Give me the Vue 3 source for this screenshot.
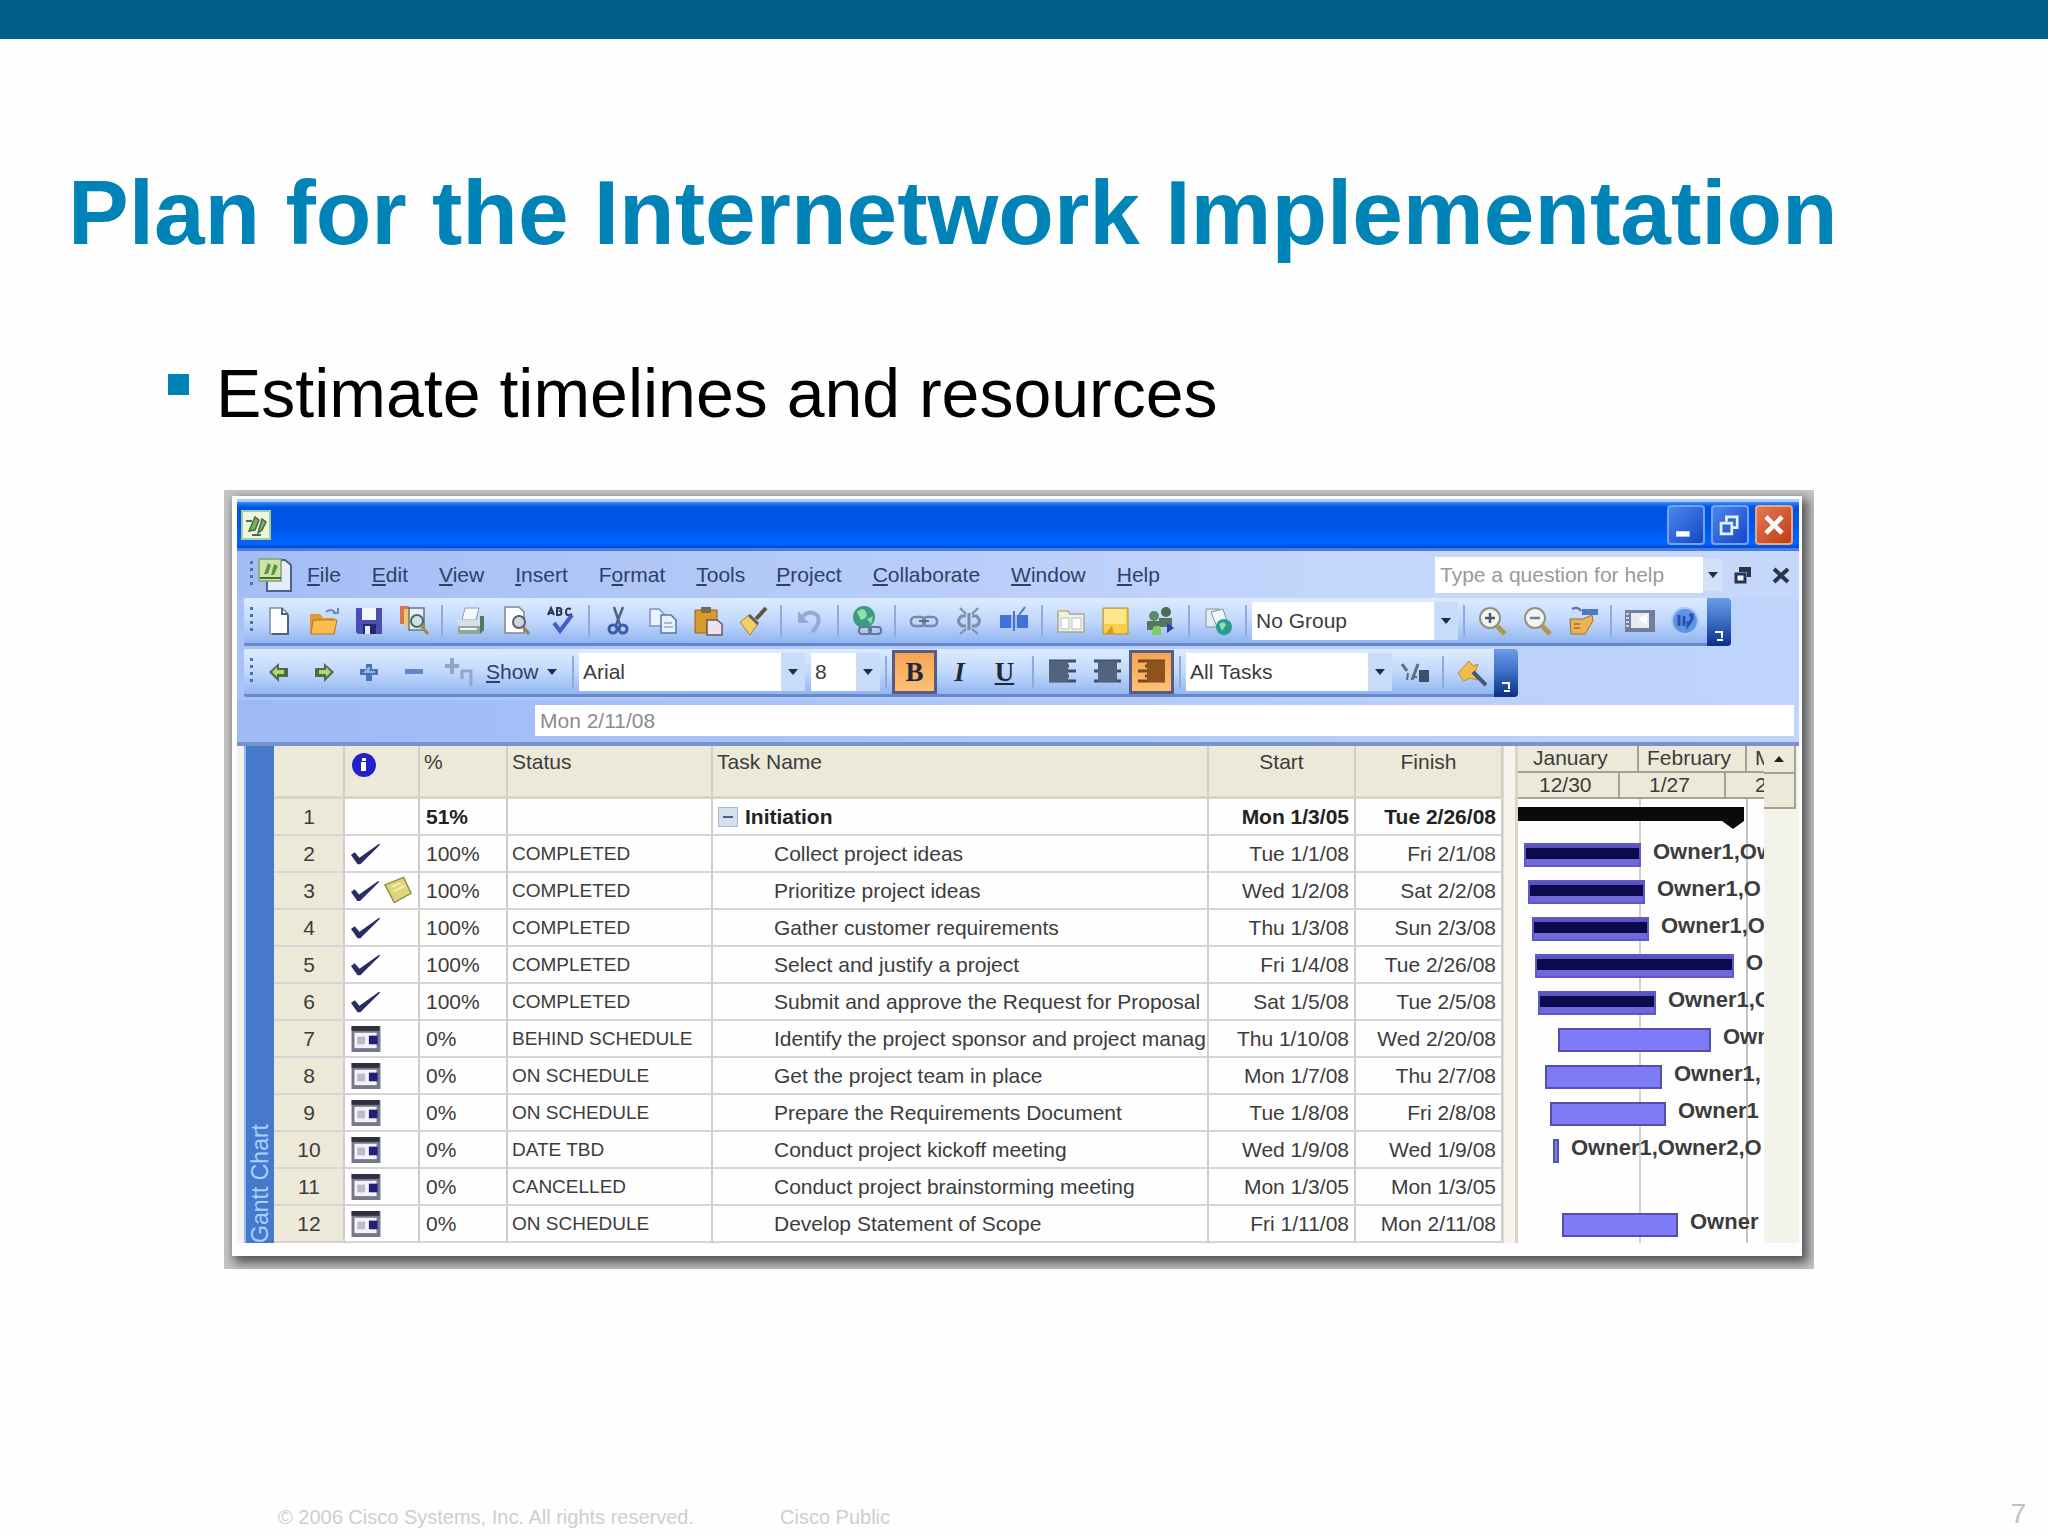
<script setup>
import { ref } from 'vue';

const menus = ['File', 'Edit', 'View', 'Insert', 'Format', 'Tools', 'Project', 'Collaborate', 'Window', 'Help'];
// index of the underlined access key, 0 when missing
const accessKeys = { Format: 1 };

const icons = {
  blank: '<path d="M6 2h12l6 6v20H6z" fill="#fff" stroke="#7c8ba8" stroke-width="1.5"/><path d="M18 2v6h6M24 9v19H8" fill="none" stroke="#55617c" stroke-width="2"/>',
  open: '<path d="M1 8h10l3 4h12v16H1z" fill="#e39a2c"/><path d="M4 14h24l-3 14H2z" fill="#fbbd4e" stroke="#b0752a" stroke-width="1"/><path d="M17 6q6-5 10 2M24 7h5V2" fill="none" stroke="#6b88bf" stroke-width="2"/>',
  save: '<path d="M2 2h26v26H4l-2-2z" fill="#4a4fb4"/><path d="M8 2h14v12H8z" fill="#f4f6ff"/><path d="M9 18h13v10H9z" fill="#26286e"/><path d="M11 20h5v8h-5z" fill="#e6eaff"/>',
  search: '<path d="M1 0h9v18H1z" fill="#d8744e"/><path d="M5 3h9v18H5z" fill="#f2c66d"/><path d="M10 2h15v22H10z" fill="#e8f0f4" stroke="#5c7a86" stroke-width="1.5"/><circle cx="18" cy="15" r="6" fill="#c6e4ea" stroke="#54675c" stroke-width="2"/><path d="M22 20l7 8" stroke="#a58a4b" stroke-width="3"/>',
  print: '<path d="M9 2h14l-3 12H6z" fill="#f5f8fb" stroke="#8c9cab"/><path d="M2 14h22l4-5v14l-4 5H2z" fill="#8fa79f"/><path d="M2 14h22v6H2z" fill="#d7e2de"/><path d="M24 10h4v14l-4 4z" fill="#4b7a5e"/><path d="M4 23h17" stroke="#f2f6f4" stroke-width="2"/>',
  preview: '<path d="M4 1h14l5 5v21H4z" fill="#fff" stroke="#7c8791" stroke-width="1.5"/><circle cx="18" cy="16" r="6" fill="#cdd8e0" stroke="#5b5f66" stroke-width="2"/><path d="M22 21l6 7" stroke="#977f4f" stroke-width="3"/>',
  spell: '<path d="M2 9l3-7 3 7M3 7h4M11 2v7h3q3-2 0-4q3-1 0-3zM25 3q-5-2-5 3t6 2" fill="none" stroke="#2d3550" stroke-width="2"/><path d="M8 17l6 8L26 9" fill="none" stroke="#4060c8" stroke-width="4"/>',
  cut: '<path d="M11 1l6 18M20 1l-7 18" stroke="#4c6288" stroke-width="2.5"/><circle cx="10" cy="23" r="4" fill="none" stroke="#3a5aa8" stroke-width="3"/><circle cx="20" cy="23" r="4" fill="none" stroke="#3a5aa8" stroke-width="3"/>',
  copy: '<path d="M2 3h9l5 5v12H2z" fill="#eaf2ff" stroke="#7b93c4" stroke-width="1.5"/><path d="M13 9h10l5 5v13H13z" fill="#eaf2ff" stroke="#5674b4" stroke-width="1.5"/><path d="M16 17h8M16 21h9" stroke="#8ba6da" stroke-width="1.5"/>',
  paste: '<path d="M2 4h22v23H2z" fill="#d99a2b" stroke="#8d6326"/><path d="M8 1h10v6H8z" fill="#7b6a4c"/><path d="M14 14h10l5 4v11H14z" fill="#e9e4f0" stroke="#6c5560" stroke-width="1.5"/>',
  painter: '<path d="M28 2L18 13" stroke="#5f563f" stroke-width="4"/><path d="M11 9l9 9-8 11L2 16z" fill="#f2cd68" stroke="#a7823c"/><path d="M11 9l9 9" stroke="#6a5e50" stroke-width="3"/>',
  undo: '<path d="M6 12q8-9 16-3q5 7-5 17" fill="none" stroke="#94a9d6" stroke-width="4"/><path d="M3 5v12h11z" fill="#94a9d6"/>',
  globe: '<circle cx="12" cy="11" r="11" fill="#3d9a83"/><path d="M5 6q6-6 9 0t-5 8zM15 13l6-3-2 8z" fill="#8fe0a9"/><rect x="7" y="21" width="12" height="7" rx="3" fill="none" stroke="#66788e" stroke-width="2"/><rect x="17" y="21" width="12" height="7" rx="3" fill="none" stroke="#66788e" stroke-width="2"/>',
  link: '<rect x="2" y="11" width="14" height="9" rx="4" fill="none" stroke="#7489aa" stroke-width="2.5"/><rect x="14" y="11" width="14" height="9" rx="4" fill="none" stroke="#7489aa" stroke-width="2.5"/><path d="M10 15h10" stroke="#5b6b88" stroke-width="2"/>',
  unlink: '<path d="M6 2l6 6M24 2l-6 6M6 28l6-5M24 28l-6-5" stroke="#7d8daa" stroke-width="2"/><path d="M12 10H8q-7 5 0 10h4M18 10h4q7 5 0 10h-4M15 7v17" fill="none" stroke="#7d8daa" stroke-width="3"/>',
  split: '<path d="M1 9h11v13H1zM18 9h11v13H18z" fill="#4272d8"/><path d="M12 9h6v13h-6z" fill="#9dbdf3"/><path d="M26 1l-6 8M15 5v20" stroke="#5774b0" stroke-width="2" fill="none"/>',
  info: '<path d="M2 5h10l2 3h14v18H2z" fill="#eeefe8" stroke="#a3a898" stroke-width="1.5"/><path d="M5 12h8v11H5zM16 12h9v11h-9z" fill="#fff" stroke="#bdbfb2"/><path d="M2 5h9" stroke="#d5c46b" stroke-width="2"/>',
  note: '<path d="M2 2h25v26H2z" fill="#f8cf4b" stroke="#b38b2d"/><path d="M3 3h22v15H3z" fill="#ffe88c"/><path d="M4 28l7-8 2 8z" fill="#d99b22"/>',
  assign: '<circle cx="20" cy="6" r="5" fill="#4c6b55"/><circle cx="8" cy="10" r="5" fill="#5d8d63"/><path d="M1 15h13v9H1zM13 12h13v9H13z" fill="#54755f"/><path d="M7 21q8-4 8 4v4H6z" fill="#7fcf67"/><path d="M21 17l7 5-7 5z" fill="#2c3fb8"/>',
  publish: '<path d="M3 3h13v18H3z" fill="#e4eaf2" stroke="#8391a6"/><path d="M8 6l12-3 4 12-10 6z" fill="#f4f7fb" stroke="#8391a6"/><circle cx="21" cy="21" r="8" fill="#2a9a93"/><path d="M16 18q5-4 7 1l-4 6z" fill="#8ee0b5"/>',
  zoomIn: '<circle cx="12" cy="12" r="10" fill="#f2f4ee" stroke="#8f947f" stroke-width="2"/><path d="M7 12h10M12 7v10" stroke="#4b5870" stroke-width="2.5"/><path d="M19 20l8 8" stroke="#b19a4b" stroke-width="5"/>',
  zoomOut: '<circle cx="12" cy="12" r="10" fill="#f2f4ee" stroke="#8f947f" stroke-width="2"/><path d="M7 12h10" stroke="#6e7fae" stroke-width="2.5"/><path d="M19 20l8 8" stroke="#b19a4b" stroke-width="5"/>',
  goTo: '<path d="M4 3q6-3 9 2" fill="none" stroke="#60749e" stroke-width="2"/><path d="M14 3h16v6H14z" fill="#4b7cc9"/><path d="M2 13h13l9-4 1 6-8 13H3z" fill="#edb254" stroke="#9b6f2c"/><path d="M6 18h6M6 22h6" stroke="#9b6f2c" stroke-width="1.5"/>',
  camera: '<path d="M0 4h30v22H0z" fill="#71809a"/><path d="M6 7h18v15H6z" fill="#e6ebf4"/><path d="M13 13l9-5v11z" fill="#fff"/><path d="M1 8h3M1 12h3M1 16h3M1 20h3" stroke="#c9d2e2" stroke-width="2"/>',
  help: '<circle cx="15" cy="15" r="13" fill="#5e93e6" stroke="#a9c8f6" stroke-width="2"/><path d="M9 9v11M14 10v10M19 9h3v4l-4 6v-4" fill="none" stroke="#2753b0" stroke-width="3"/>',
  left: '<path d="M15 6v5h9v9h-9v5L5 15z" fill="#4f6b4a"/><path d="M13 10v3h7v4h-7v3l-5-5z" fill="#b6d66c"/>',
  right: '<path d="M15 6v5H6v9h9v5l10-10z" fill="#4f6b4a"/><path d="M17 10v3h-7v4h7v3l5-5z" fill="#b6d66c"/>',
  plus: '<path d="M12 7h6v5h6v6h-6v6h-6v-6H6v-6h6z" fill="#4a72b8"/><path d="M14 10h2v4h5v2H9" fill="#8fb3ea"/>',
  minus: '<path d="M6 12h18v5H6z" fill="#5f88c9"/>',
  outline: '<path d="M8 1v16M1 9h14" stroke="#93a4c5" stroke-width="4"/><path d="M17 14h10v5M18 14v8M27 19v10" fill="none" stroke="#93a4c5" stroke-width="3"/>',
  alignLeft: '<path d="M2 4h27M2 9h20M2 14h27M2 19h20M2 24h27" stroke="#3e506b" stroke-width="3"/><path d="M2 4h19v21H2z" fill="#52637c"/>',
  alignCenter: '<path d="M2 4h27M6 9h19M2 14h27M6 19h19M2 24h27" stroke="#3e506b" stroke-width="3"/><path d="M6 4h19v21H6z" fill="#52637c"/>',
  alignRight: '<path d="M1 4h27M8 9h20M1 14h27M8 19h20M1 24h27" stroke="#7b4a1c" stroke-width="3"/><path d="M10 4h18v21H10z" fill="#8c541c"/>',
  filter: '<path d="M2 7l5 7M18 7l-6 16" fill="none" stroke="#5f6c80" stroke-width="3"/><path d="M8 16l-1 7M12 20h5" fill="none" stroke="#5f6c80" stroke-width="2"/><path d="M19 13h10v12H19z" fill="#3c5068"/>',
  wizard: '<path d="M1 16L12 4l4 5 5-2-3 9 2 7-7-2-6 3z" fill="#f0bd4e" stroke="#b98b3a"/><path d="M16 15l13 13" stroke="#41557f" stroke-width="4"/>',
};

// "|" draws a separator
const standardBar = [
  'blank', 'open', 'save', 'search', '|',
  'print', 'preview', 'spell', '|',
  'cut', 'copy', 'paste', 'painter', '|',
  'undo', '|', 'globe', '|',
  'link', 'unlink', 'split', '|',
  'info', 'note', 'assign', '|',
  'publish', '|',
];
const zoomBar = ['|', 'zoomIn', 'zoomOut', 'goTo', '|', 'camera', 'help'];
const outlineBar = ['left', 'right', 'plus', 'minus', 'outline'];

const group = ref('No Group');
const font = ref('Arial');
const size = ref('8');
const filter = ref('All Tasks');
const entry = ref('Mon 2/11/08');

// bar: [start, width] on the timescale, in pixels from its left edge
const tasks = [
  { percent: '51%', status: '', name: 'Initiation', start: 'Mon 1/3/05', finish: 'Tue 2/26/08', summary: true, bar: [0, 226] },
  { percent: '100%', status: 'COMPLETED', name: 'Collect project ideas', start: 'Tue 1/1/08', finish: 'Fri 2/1/08', bar: [6, 117], owner: 'Owner1,Ow' },
  { percent: '100%', status: 'COMPLETED', name: 'Prioritize project ideas', start: 'Wed 1/2/08', finish: 'Sat 2/2/08', note: true, bar: [10, 117], owner: 'Owner1,O' },
  { percent: '100%', status: 'COMPLETED', name: 'Gather customer requirements', start: 'Thu 1/3/08', finish: 'Sun 2/3/08', bar: [14, 117], owner: 'Owner1,O' },
  { percent: '100%', status: 'COMPLETED', name: 'Select and justify a project', start: 'Fri 1/4/08', finish: 'Tue 2/26/08', bar: [17, 199], owner: 'O' },
  { percent: '100%', status: 'COMPLETED', name: 'Submit and approve the Request for Proposal', start: 'Sat 1/5/08', finish: 'Tue 2/5/08', bar: [20, 118], owner: 'Owner1,O' },
  { percent: '0%', status: 'BEHIND SCHEDULE', name: 'Identify the project sponsor and project manag', start: 'Thu 1/10/08', finish: 'Wed 2/20/08', bar: [40, 153], owner: 'Own' },
  { percent: '0%', status: 'ON SCHEDULE', name: 'Get the project team in place', start: 'Mon 1/7/08', finish: 'Thu 2/7/08', bar: [27, 117], owner: 'Owner1,' },
  { percent: '0%', status: 'ON SCHEDULE', name: 'Prepare the Requirements Document', start: 'Tue 1/8/08', finish: 'Fri 2/8/08', bar: [32, 116], owner: 'Owner1' },
  { percent: '0%', status: 'DATE TBD', name: 'Conduct project kickoff meeting', start: 'Wed 1/9/08', finish: 'Wed 1/9/08', bar: [35, 6], owner: 'Owner1,Owner2,O' },
  { percent: '0%', status: 'CANCELLED', name: 'Conduct project brainstorming meeting', start: 'Mon 1/3/05', finish: 'Mon 1/3/05' },
  { percent: '0%', status: 'ON SCHEDULE', name: 'Develop Statement of Scope', start: 'Fri 1/11/08', finish: 'Mon 2/11/08', bar: [44, 116], owner: 'Owner' },
];

function barStyle(task) {
  return { marginLeft: task.bar[0] + 'px', width: task.bar[1] + 'px' };
}
</script>

<template>
  <div class="slide">
    <div class="slide-band"></div>
    <main class="slide-main">
      <h1>Plan for the Internetwork Implementation</h1>
      <ul class="points">
        <li>Estimate timelines and resources</li>
      </ul>

      <figure class="shot">
        <div class="shot-card">
          <div class="window">
            <header class="titlebar">
              <svg class="app-icon" viewBox="0 0 30 30" aria-hidden="true">
                <rect x="1" y="1" width="28" height="28" fill="#eef7dc" stroke="#9fce9c" stroke-width="2" />
                <path d="M8 21l6-14 4 3-4 10zM17 23l4-14 4 3-4 8z" fill="#7fae5c" stroke="#476b45" stroke-width="1.5" />
                <path d="M5 11h6M11 25h9" stroke="#49704b" stroke-width="2" />
              </svg>
              <div class="caption-buttons">
                <button type="button" class="caption-btn" aria-label="Minimize">
                  <svg viewBox="0 0 38 40"><path d="M8 27h15v6H8z" fill="#fff" /></svg>
                </button>
                <button type="button" class="caption-btn" aria-label="Restore">
                  <svg viewBox="0 0 38 40">
                    <path d="M15 16v-5h12v12h-5M9 18h12v12H9z" fill="none" stroke="#e6f0ff" stroke-width="3" />
                  </svg>
                </button>
                <button type="button" class="caption-btn close" aria-label="Close">
                  <svg viewBox="0 0 38 40"><path d="M10 11l18 18M28 11L10 29" stroke="#fff" stroke-width="5" /></svg>
                </button>
              </div>
            </header>

            <nav class="menubar">
              <span class="grip"></span>
              <svg class="doc-icon" viewBox="0 0 36 36" aria-hidden="true">
                <path d="M10 3h18l6 5v26H10z" fill="#e6edfb" stroke="#4c6290" stroke-width="2" />
                <rect x="2" y="2" width="22" height="22" fill="#cfe3a4" stroke="#7da36a" stroke-width="1.5" />
                <path d="M7 17l4-11 3 2-3 9zM14 18l3-11 4 2-4 9z" fill="#5f9148" />
                <path d="M3 21h21" stroke="#476b45" stroke-width="2" />
              </svg>
              <div class="menu-items">
                <button v-for="menu in menus" :key="menu" type="button" class="menu-item">{{ menu.slice(0, accessKeys[menu] ?? 0) }}<u>{{ menu.charAt(accessKeys[menu] ?? 0) }}</u>{{ menu.slice((accessKeys[menu] ?? 0) + 1) }}</button>
              </div>
              <div class="menu-right">
                <input class="ask" type="text" placeholder="Type a question for help" aria-label="Type a question for help" />
                <button type="button" class="ask-arrow" aria-label="Recent questions"><span class="caret"></span></button>
                <button type="button" class="doc-btn" aria-label="Restore document">
                  <svg viewBox="0 0 20 20"><path d="M6 2h12v10h-4V7H6z" fill="#28354f" /><path d="M3 9h9v8H3z" fill="#eef4ff" stroke="#28354f" stroke-width="3" /></svg>
                </button>
                <button type="button" class="doc-btn" aria-label="Close document">
                  <svg viewBox="0 0 20 20"><path d="M3 4l14 13M17 4L3 17" stroke="#28354f" stroke-width="4" /></svg>
                </button>
              </div>
            </nav>

            <div class="dock">
              <div class="toolbar">
                <span class="grip"></span>
                <template v-for="(name, i) in standardBar" :key="i">
                  <span v-if="name === '|'" class="sep"></span>
                  <button v-else type="button" class="tool" :aria-label="name">
                    <svg viewBox="0 0 30 30" v-html="icons[name]"></svg>
                  </button>
                </template>
                <label class="combo combo-wide">
                  <select v-model="group" aria-label="Group by"><option>No Group</option></select>
                  <span class="combo-arrow"><span class="caret"></span></span>
                </label>
                <template v-for="(name, i) in zoomBar" :key="'z' + i">
                  <span v-if="name === '|'" class="sep"></span>
                  <button v-else type="button" class="tool" :aria-label="name">
                    <svg viewBox="0 0 30 30" v-html="icons[name]"></svg>
                  </button>
                </template>
                <button type="button" class="overflow" aria-label="Toolbar options">
                  <svg viewBox="0 0 12 12"><path d="M2 2h7v6M4 10h6" fill="none" stroke="#fff" stroke-width="2" /></svg>
                </button>
              </div>

              <div class="toolbar">
                <span class="grip"></span>
                <button v-for="name in outlineBar" :key="name" type="button" class="tool" :aria-label="name">
                  <svg viewBox="0 0 30 30" v-html="icons[name]"></svg>
                </button>
                <button type="button" class="show"><span><u>S</u>how</span><span class="caret"></span></button>
                <span class="sep"></span>
                <label class="combo combo-font">
                  <select v-model="font" aria-label="Font"><option>Arial</option></select>
                  <span class="combo-arrow"><span class="caret"></span></span>
                </label>
                <label class="combo combo-size">
                  <select v-model="size" aria-label="Font size"><option>8</option></select>
                  <span class="combo-arrow"><span class="caret"></span></span>
                </label>
                <span class="sep"></span>
                <button type="button" class="tool letter pressed"><b>B</b></button>
                <button type="button" class="tool letter"><i>I</i></button>
                <button type="button" class="tool letter"><u>U</u></button>
                <span class="sep"></span>
                <button type="button" class="tool" aria-label="Align left"><svg viewBox="0 0 30 30" v-html="icons.alignLeft"></svg></button>
                <button type="button" class="tool" aria-label="Center"><svg viewBox="0 0 30 30" v-html="icons.alignCenter"></svg></button>
                <button type="button" class="tool pressed" aria-label="Align right"><svg viewBox="0 0 30 30" v-html="icons.alignRight"></svg></button>
                <span class="sep"></span>
                <label class="combo combo-wide">
                  <select v-model="filter" aria-label="Filter"><option>All Tasks</option></select>
                  <span class="combo-arrow"><span class="caret"></span></span>
                </label>
                <button type="button" class="tool" aria-label="AutoFilter"><svg viewBox="0 0 30 30" v-html="icons.filter"></svg></button>
                <span class="sep"></span>
                <button type="button" class="tool" aria-label="Gantt Chart Wizard"><svg viewBox="0 0 30 30" v-html="icons.wizard"></svg></button>
                <button type="button" class="overflow" aria-label="Toolbar options">
                  <svg viewBox="0 0 12 12"><path d="M2 2h7v6M4 10h6" fill="none" stroke="#fff" stroke-width="2" /></svg>
                </button>
              </div>
            </div>

            <div class="entrybar">
              <input v-model="entry" type="text" aria-label="Entry" />
            </div>

            <div class="view">
              <div class="viewbar"><span>Gantt Chart</span></div>
              <table class="grid">
                <colgroup>
                  <col class="c-id" /><col class="c-info" /><col class="c-percent" /><col class="c-status" />
                  <col /><col class="c-date" /><col class="c-date" />
                </colgroup>
                <thead>
                  <tr>
                    <th></th>
                    <th class="info">
                      <svg class="info-icon" viewBox="0 0 24 24" aria-label="Indicators">
                        <circle cx="12" cy="12" r="12" fill="#2222cc" />
                        <path d="M9 9h5v9H9zM10 5h4v3h-4z" fill="#fff" />
                      </svg>
                    </th>
                    <th>%</th>
                    <th>Status</th>
                    <th>Task Name</th>
                    <th class="date-head">Start</th>
                    <th class="date-head">Finish</th>
                  </tr>
                </thead>
                <tbody>
                  <tr v-for="(task, i) in tasks" :key="i" :class="{ summary: task.summary }">
                    <th scope="row">{{ i + 1 }}</th>
                    <td class="info">
                      <div class="marks">
                        <svg v-if="task.percent === '100%'" class="mark" viewBox="0 0 32 24">
                          <path d="M0 13l4-3 5 6L30 1l1 1L10 23H7z" fill="#2b2b66" />
                        </svg>
                        <svg v-if="task.note" class="mark-note" viewBox="0 0 30 30">
                          <path d="M1 9L21 1l8 17L11 28z" fill="#ddd67a" stroke="#8e8a48" stroke-width="1.5" />
                          <path d="M8 11l10-4M10 16l12-6" stroke="#f6f2ae" stroke-width="2" />
                        </svg>
                        <svg v-if="task.percent === '0%'" class="mark" viewBox="0 0 30 27">
                          <path d="M0 0h30v27H0z" fill="#77778c" />
                          <path d="M0 0h29v5H0z" fill="#2f2f42" />
                          <path d="M3 7h23v16H3z" fill="#f2f2f8" />
                          <path d="M6 11h8v8H6z" fill="#b9b9c8" />
                          <path d="M18 10h9v9h-9z" fill="#20207c" />
                        </svg>
                      </div>
                    </td>
                    <td class="percent">{{ task.percent }}</td>
                    <td class="status">{{ task.status }}</td>
                    <td class="name">
                      <div class="name-inner">
                        <button v-if="task.summary" type="button" class="collapse" aria-label="Collapse"></button>
                        {{ task.name }}
                      </div>
                    </td>
                    <td class="date">{{ task.start }}</td>
                    <td class="date">{{ task.finish }}</td>
                  </tr>
                </tbody>
              </table>
              <div class="splitter"></div>
              <div class="chart">
                <div class="tier tier-months">
                  <span>January</span><span>February</span><span>M</span>
                </div>
                <div class="tier tier-days">
                  <span>12/30</span><span>1/27</span><span>2</span>
                </div>
                <div class="bars">
                  <div v-for="(task, i) in tasks" :key="i" class="bar-row">
                    <svg v-if="task.summary" class="bar-summary" :style="barStyle(task)" viewBox="0 0 226 22">
                      <path d="M0 0h226v14l-11 8-11-8H0z" fill="#0a0a0a" />
                    </svg>
                    <template v-else-if="task.bar">
                      <span class="bar" :class="{ done: task.percent === '100%' }" :style="barStyle(task)"></span>
                      <span class="owner">{{ task.owner }}</span>
                    </template>
                  </div>
                </div>
              </div>
              <div class="scroll">
                <button type="button" class="scroll-up" aria-label="Scroll up"><span class="caret up"></span></button>
                <div class="scroll-thumb"></div>
              </div>
            </div>
          </div>
        </div>
      </figure>
    </main>

    <footer class="slide-footer">
      <span>© 2006 Cisco Systems, Inc. All rights reserved.</span>
      <span>Cisco Public</span>
      <span class="page-no">7</span>
    </footer>
  </div>
</template>

<style>
body {
  margin: 0;
  background: #fefefe;
}
</style>

<style scoped>
.slide {
  display: flex;
  flex-direction: column;
  min-height: 100vh;
  font-family: 'Liberation Sans', Arial, sans-serif;
  color: #000;
}

.slide * {
  box-sizing: border-box;
}

.slide-band {
  height: 39px;
  background: #005f87;
}

.slide-main {
  flex: 1;
  padding-top: 122px;
}

h1 {
  margin: 0 0 88px 68px;
  font-size: 91px;
  line-height: 104px;
  color: #0084b8;
}

.points {
  list-style: none;
  margin: 0 0 57px 168px;
  padding: 0;
}

.points li {
  display: flex;
  gap: 27px;
  font-size: 68px;
  line-height: 80px;
}

.points li::before {
  content: '';
  width: 21px;
  height: 21px;
  margin-top: 21px;
  background: #0084b8;
}

.shot {
  margin: 0 234px 0 224px;
  padding: 6px 12px 13px 8px;
  background: #c6c6c6;
  overflow: hidden;
}

.shot-card {
  padding: 3px 3px 13px 5px;
  background: #fdfdfd;
  box-shadow: 4px 5px 10px 2px #555;
}

.window {
  border-top: 3px solid #a9cdfd;
  font-size: 21px;
  line-height: 24px;
  color: #3c3c3c;
}

button,
input,
select {
  font: inherit;
  color: inherit;
  margin: 0;
  padding: 0;
  border: 0;
  background: none;
  border-radius: 0;
}

.titlebar {
  display: flex;
  align-items: center;
  justify-content: space-between;
  height: 49px;
  padding: 0 6px 0 4px;
  border-bottom: 3px solid #4a7ce0;
  background: linear-gradient(#3a8cf8 0, #0053e0 5px, #0055e6 50%, #0066ff 90%, #0048d0);
}

.app-icon {
  width: 30px;
  height: 32px;
}

.caption-buttons {
  display: flex;
  gap: 6px;
}

.caption-btn {
  width: 38px;
  height: 40px;
  border: 2px solid #6fa4f8;
  border-radius: 4px;
  background: linear-gradient(135deg, #4a86ee, #1747c4);
}

.caption-btn.close {
  border-color: #e9a58e;
  background: linear-gradient(135deg, #e37a54, #c23c14);
}

.caption-btn svg {
  display: block;
  width: 100%;
  height: 100%;
}

.menubar {
  display: flex;
  align-items: center;
  height: 47px;
  padding: 0 8px 0 13px;
  background: linear-gradient(90deg, #a4bdf5, #c5d8fc 75%);
  color: #2f4068;
}

.grip {
  width: 3px;
  height: 28px;
  background: repeating-linear-gradient(#506fae 0 3px, transparent 3px 7px);
}

.doc-icon {
  width: 36px;
  height: 36px;
  margin-left: 4px;
}

.menu-items {
  display: flex;
  gap: 31px;
  margin-left: 14px;
}

.menu-right {
  display: flex;
  align-items: center;
  margin-left: auto;
}

.ask {
  width: 268px;
  height: 36px;
  padding: 0 5px;
  background: #fff;
}

.ask::placeholder {
  color: #9a9a9a;
  opacity: 1;
}

.ask-arrow {
  display: flex;
  align-items: center;
  justify-content: center;
  width: 20px;
  height: 32px;
  background: #d3e0f8;
}

.doc-btn {
  width: 20px;
  height: 20px;
  margin-left: 18px;
}

.doc-btn:nth-of-type(2) {
  margin-left: 10px;
}

.doc-btn svg {
  display: block;
}

.caret {
  border: 5px solid transparent;
  border-top: 6px solid #1c2d50;
  border-bottom: 0;
}

.caret.up {
  border-top: 0;
  border-bottom: 6px solid #222;
}

.dock {
  display: flex;
  flex-direction: column;
  align-items: flex-start;
  gap: 3px;
  padding: 0 0 3px 7px;
  background: linear-gradient(90deg, #a9c2f7, #c0d5fc);
}

.toolbar {
  display: flex;
  align-items: center;
  height: 48px;
  padding-left: 6px;
  border-bottom: 3px solid #6488cb;
  border-radius: 2px 4px 4px 2px;
  background: linear-gradient(#dcebff, #c2d9fc 50%, #92b5f0);
}

.toolbar .grip {
  margin-right: 3px;
}

.tool {
  display: flex;
  align-items: center;
  justify-content: center;
  width: 45px;
  height: 44px;
}

.tool svg {
  width: 30px;
  height: 30px;
}

.tool.pressed {
  border: 3px solid #5a5a86;
  background: linear-gradient(#f6a552, #fdc173);
}

.letter {
  font-family: 'Liberation Serif', serif;
  font-size: 27px;
  font-weight: bold;
  color: #20293c;
}

.sep {
  width: 2px;
  height: 32px;
  margin: 0 5px;
  background: #8fabdd;
}

.combo {
  display: grid;
  height: 38px;
  background: #fff;
}

.combo select {
  grid-area: 1 / 1;
  width: 100%;
  padding-left: 4px;
  appearance: none;
}

.combo-arrow {
  grid-area: 1 / 1;
  justify-self: end;
  display: flex;
  align-items: center;
  justify-content: center;
  width: 24px;
  background: #c8dbf8;
  pointer-events: none;
}

.combo-wide {
  width: 206px;
}

.combo-font {
  width: 226px;
  margin-right: 6px;
}

.combo-size {
  width: 69px;
}

.show {
  display: flex;
  align-items: center;
  gap: 8px;
  width: 86px;
  padding-left: 5px;
  color: #2f4068;
}

.overflow {
  align-self: stretch;
  display: flex;
  align-items: flex-end;
  justify-content: center;
  width: 24px;
  height: 48px;
  padding-bottom: 4px;
  border-radius: 0 4px 4px 0;
  background: linear-gradient(#6c9be6, #3a6cc4 50%, #0a2f88);
}

.overflow svg {
  width: 12px;
  height: 12px;
}

.entrybar {
  display: flex;
  height: 46px;
  padding: 5px 5px 6px 298px;
  border-bottom: 4px solid #7892d0;
  background: linear-gradient(90deg, #9dbaf6, #c0d5fc);
}

.entrybar input {
  flex: 1;
  padding: 0 5px;
  background: #fff;
  color: #8c8c8c;
}

.view {
  display: flex;
  padding: 0 2px 0 7px;
  background: #f4f3ee;
}

.viewbar {
  display: flex;
  width: 30px;
  border-left: 2px solid #8fb8f4;
  background: #4678cc;
  color: #a9d2ff;
  overflow: hidden;
}

.viewbar span {
  margin: auto 0 0;
  font-size: 23px;
  line-height: 28px;
  white-space: nowrap;
  writing-mode: vertical-rl;
  transform: rotate(180deg);
}

.grid {
  flex: 1;
  width: 0;
  table-layout: fixed;
  border-collapse: separate;
  border-spacing: 0;
  background: #fefefe;
}

.c-id {
  width: 71px;
}

.c-info {
  width: 75px;
}

.c-percent {
  width: 88px;
}

.c-status {
  width: 205px;
}

.c-date {
  width: 147px;
}

th,
td {
  padding: 0 5px 0 6px;
  border-right: 2px solid #cfcdca;
  border-bottom: 2px solid #d6d4d4;
  font-weight: normal;
  text-align: left;
  white-space: nowrap;
  overflow: hidden;
}

thead th {
  height: 53px;
  padding: 4px 4px 0;
  border-bottom: 3px solid #d8d5c6;
  background: #ece9d8;
  vertical-align: top;
}

thead .date-head {
  text-align: center;
}

tbody th {
  height: 37px;
  background: #ece9d8;
  text-align: center;
}

.info {
  padding: 0 6px;
}

thead .info {
  padding: 7px 6px 0;
}

.info-icon {
  display: block;
  width: 24px;
  height: 24px;
  margin-left: 1px;
}

.marks {
  display: flex;
  align-items: center;
  gap: 4px;
}

.mark {
  width: 30px;
  height: 26px;
}

.mark-note {
  width: 29px;
  height: 29px;
}

.status {
  padding: 0 4px;
  font-size: 19px;
}

.name {
  padding: 0 0 0 61px;
}

.name-inner {
  overflow: hidden;
}

.date {
  text-align: right;
}

.summary td {
  font-weight: bold;
  color: #222;
}

.summary .name {
  padding-left: 5px;
}

.summary .name-inner {
  display: flex;
  align-items: center;
  gap: 7px;
}

.collapse {
  width: 20px;
  height: 20px;
  border: 1px solid #a9b9cf;
  background: linear-gradient(#4b5f86, #4b5f86) center / 10px 2px no-repeat #d5e0ee;
}

.splitter {
  width: 15px;
  border-left: 1px solid #e0ddd2;
  border-right: 3px solid #d9d6c6;
  background: #f6f4ec;
}

.chart {
  display: flex;
  flex-direction: column;
  width: 246px;
  overflow: hidden;
}

.tier {
  display: grid;
  background: #ece9d8;
  border-bottom: 2px solid #a5a294;
  overflow: hidden;
}

.tier span {
  overflow: hidden;
  border-right: 2px solid #a5a294;
}

.tier span:last-child {
  border-right: 0;
}

.tier-months {
  grid-template-columns: 121px 108px 1fr;
  height: 27px;
}

.tier-months span {
  padding-left: 8px;
}

.tier-months span:first-child {
  padding-left: 15px;
}

.tier-days {
  grid-template-columns: 102px 106px 1fr;
  height: 26px;
}

.tier-days span {
  padding-left: 29px;
}

.tier-days span:first-child {
  padding-left: 21px;
}

.bars {
  flex: 1;
  background:
    linear-gradient(#d2d2d2, #d2d2d2) 121px 0 / 2px 100% no-repeat,
    linear-gradient(#c2c2c2, #c2c2c2) 228px 0 / 2px 100% no-repeat,
    #fefefe;
}

.bar-row {
  display: flex;
  align-items: center;
  height: 37px;
  overflow: hidden;
}

.bar-summary,
.bar {
  flex: none;
  height: 24px;
}

.bar {
  border: 2px solid #5450b0;
  background: #7f7af6;
}

.bar.done {
  border-color: #5f58c8;
  background: linear-gradient(#5a54b8 3px, #0c0a4c 3px 14px, #6f68d8 14px);
}

.owner {
  padding-left: 12px;
  padding-bottom: 5px;
  font-size: 22px;
  font-weight: bold;
  white-space: nowrap;
}

.scroll {
  width: 33px;
  background: #f4f3ea;
}

.scroll-up {
  display: flex;
  align-items: center;
  justify-content: center;
  width: 32px;
  height: 28px;
  border-right: 2px solid #a5a294;
  border-bottom: 2px solid #a5a294;
  background: #ece9d8;
}

.scroll-thumb {
  width: 32px;
  height: 35px;
  border-right: 2px solid #a5a294;
  border-bottom: 2px solid #a5a294;
  background: #ece9d8;
}

.slide-footer {
  display: flex;
  align-items: flex-end;
  gap: 86px;
  padding: 0 22px 7px 278px;
  font-size: 20px;
  line-height: 24px;
  color: #cfcdd1;
}

.page-no {
  margin-left: auto;
  font-size: 28px;
  line-height: 30px;
  color: #c3c1c5;
}
</style>
